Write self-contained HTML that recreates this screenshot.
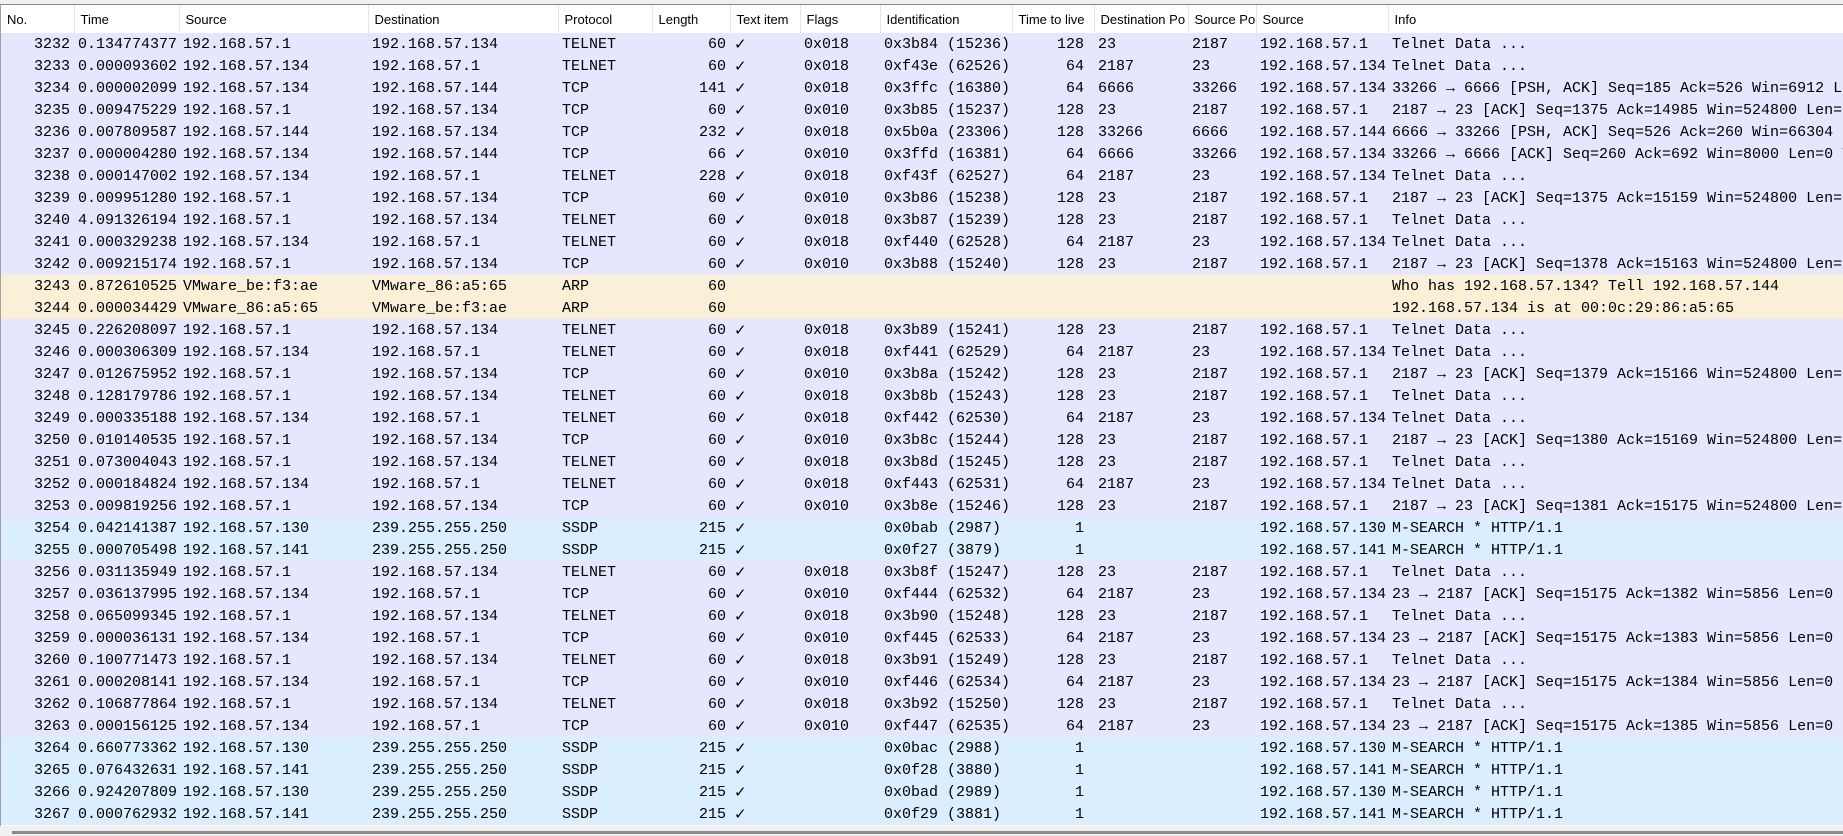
<!DOCTYPE html>
<html><head><meta charset="utf-8"><style>
body{margin:0;width:1843px;height:836px;background:#f0f0f0;overflow:hidden;position:relative}
.top{position:absolute;left:0;top:0;width:1843px;height:4px;background:#f0f0f0;border-bottom:1px solid #828790}
.frame{position:absolute;left:0;top:5px;width:1843px;height:821px;border-left:1px solid #a0a0a0;background:#fff;overflow:hidden}
table{border-collapse:collapse;table-layout:fixed;width:2100px}
th{height:28px;padding:0 0 0 6px;font:13px "Liberation Sans",sans-serif;text-align:left;font-weight:normal;color:#000;border-right:1px solid #e5e5e5;background:#fff;white-space:nowrap;overflow:hidden}
td{height:22px;padding:0 4px;font:15px "Liberation Mono",monospace;white-space:nowrap;overflow:hidden;color:#000}
tr.t td{background:#e7e6ff}tr.a td{background:#faf0d7}tr.s td{background:#daeeff}
td.r{text-align:right}
.bot{position:absolute;left:0;top:826px;width:1843px;height:10px;background:#f0f0f0}
.sb{position:absolute;left:12px;top:831px;width:1831px;height:3px;background:#8a8a8a}
</style></head><body>
<div class="top"></div>
<div class="frame"><table>
<colgroup><col style="width:73px"><col style="width:105px"><col style="width:189px"><col style="width:190px"><col style="width:94px"><col style="width:78px"><col style="width:70px"><col style="width:80px"><col style="width:132px"><col style="width:82px"><col style="width:94px"><col style="width:68px"><col style="width:132px"><col style="width:713px"></colgroup>
<tr><th>No.</th><th>Time</th><th>Source</th><th>Destination</th><th>Protocol</th><th>Length</th><th>Text item</th><th>Flags</th><th>Identification</th><th>Time to live</th><th>Destination Po</th><th>Source Po</th><th>Source</th><th>Info</th></tr>
<tbody id="b"></tbody></table></div>
<div class="bot"></div><div class="sb"></div>
<script>
var R=[
["t",3232,"0.134774377","192.168.57.1","192.168.57.134","TELNET",60,"0x018","0x3b84 (15236)",128,"23","2187","192.168.57.1","Telnet Data ..."],
["t",3233,"0.000093602","192.168.57.134","192.168.57.1","TELNET",60,"0x018","0xf43e (62526)",64,"2187","23","192.168.57.134","Telnet Data ..."],
["t",3234,"0.000002099","192.168.57.134","192.168.57.144","TCP",141,"0x018","0x3ffc (16380)",64,"6666","33266","192.168.57.134","33266 → 6666 [PSH, ACK] Seq=185 Ack=526 Win=6912 Len=89"],
["t",3235,"0.009475229","192.168.57.1","192.168.57.134","TCP",60,"0x010","0x3b85 (15237)",128,"23","2187","192.168.57.1","2187 → 23 [ACK] Seq=1375 Ack=14985 Win=524800 Len=0"],
["t",3236,"0.007809587","192.168.57.144","192.168.57.134","TCP",232,"0x018","0x5b0a (23306)",128,"33266","6666","192.168.57.144","6666 → 33266 [PSH, ACK] Seq=526 Ack=260 Win=66304 Len=178"],
["t",3237,"0.000004280","192.168.57.134","192.168.57.144","TCP",66,"0x010","0x3ffd (16381)",64,"6666","33266","192.168.57.134","33266 → 6666 [ACK] Seq=260 Ack=692 Win=8000 Len=0 TSval"],
["t",3238,"0.000147002","192.168.57.134","192.168.57.1","TELNET",228,"0x018","0xf43f (62527)",64,"2187","23","192.168.57.134","Telnet Data ..."],
["t",3239,"0.009951280","192.168.57.1","192.168.57.134","TCP",60,"0x010","0x3b86 (15238)",128,"23","2187","192.168.57.1","2187 → 23 [ACK] Seq=1375 Ack=15159 Win=524800 Len=0"],
["t",3240,"4.091326194","192.168.57.1","192.168.57.134","TELNET",60,"0x018","0x3b87 (15239)",128,"23","2187","192.168.57.1","Telnet Data ..."],
["t",3241,"0.000329238","192.168.57.134","192.168.57.1","TELNET",60,"0x018","0xf440 (62528)",64,"2187","23","192.168.57.134","Telnet Data ..."],
["t",3242,"0.009215174","192.168.57.1","192.168.57.134","TCP",60,"0x010","0x3b88 (15240)",128,"23","2187","192.168.57.1","2187 → 23 [ACK] Seq=1378 Ack=15163 Win=524800 Len=0"],
["a",3243,"0.872610525","VMware_be:f3:ae","VMware_86:a5:65","ARP",60,"","","","","","","Who has 192.168.57.134? Tell 192.168.57.144"],
["a",3244,"0.000034429","VMware_86:a5:65","VMware_be:f3:ae","ARP",60,"","","","","","","192.168.57.134 is at 00:0c:29:86:a5:65"],
["t",3245,"0.226208097","192.168.57.1","192.168.57.134","TELNET",60,"0x018","0x3b89 (15241)",128,"23","2187","192.168.57.1","Telnet Data ..."],
["t",3246,"0.000306309","192.168.57.134","192.168.57.1","TELNET",60,"0x018","0xf441 (62529)",64,"2187","23","192.168.57.134","Telnet Data ..."],
["t",3247,"0.012675952","192.168.57.1","192.168.57.134","TCP",60,"0x010","0x3b8a (15242)",128,"23","2187","192.168.57.1","2187 → 23 [ACK] Seq=1379 Ack=15166 Win=524800 Len=0"],
["t",3248,"0.128179786","192.168.57.1","192.168.57.134","TELNET",60,"0x018","0x3b8b (15243)",128,"23","2187","192.168.57.1","Telnet Data ..."],
["t",3249,"0.000335188","192.168.57.134","192.168.57.1","TELNET",60,"0x018","0xf442 (62530)",64,"2187","23","192.168.57.134","Telnet Data ..."],
["t",3250,"0.010140535","192.168.57.1","192.168.57.134","TCP",60,"0x010","0x3b8c (15244)",128,"23","2187","192.168.57.1","2187 → 23 [ACK] Seq=1380 Ack=15169 Win=524800 Len=0"],
["t",3251,"0.073004043","192.168.57.1","192.168.57.134","TELNET",60,"0x018","0x3b8d (15245)",128,"23","2187","192.168.57.1","Telnet Data ..."],
["t",3252,"0.000184824","192.168.57.134","192.168.57.1","TELNET",60,"0x018","0xf443 (62531)",64,"2187","23","192.168.57.134","Telnet Data ..."],
["t",3253,"0.009819256","192.168.57.1","192.168.57.134","TCP",60,"0x010","0x3b8e (15246)",128,"23","2187","192.168.57.1","2187 → 23 [ACK] Seq=1381 Ack=15175 Win=524800 Len=0"],
["s",3254,"0.042141387","192.168.57.130","239.255.255.250","SSDP",215,"","0x0bab (2987)",1,"","","192.168.57.130","M-SEARCH * HTTP/1.1"],
["s",3255,"0.000705498","192.168.57.141","239.255.255.250","SSDP",215,"","0x0f27 (3879)",1,"","","192.168.57.141","M-SEARCH * HTTP/1.1"],
["t",3256,"0.031135949","192.168.57.1","192.168.57.134","TELNET",60,"0x018","0x3b8f (15247)",128,"23","2187","192.168.57.1","Telnet Data ..."],
["t",3257,"0.036137995","192.168.57.134","192.168.57.1","TCP",60,"0x010","0xf444 (62532)",64,"2187","23","192.168.57.134","23 → 2187 [ACK] Seq=15175 Ack=1382 Win=5856 Len=0"],
["t",3258,"0.065099345","192.168.57.1","192.168.57.134","TELNET",60,"0x018","0x3b90 (15248)",128,"23","2187","192.168.57.1","Telnet Data ..."],
["t",3259,"0.000036131","192.168.57.134","192.168.57.1","TCP",60,"0x010","0xf445 (62533)",64,"2187","23","192.168.57.134","23 → 2187 [ACK] Seq=15175 Ack=1383 Win=5856 Len=0"],
["t",3260,"0.100771473","192.168.57.1","192.168.57.134","TELNET",60,"0x018","0x3b91 (15249)",128,"23","2187","192.168.57.1","Telnet Data ..."],
["t",3261,"0.000208141","192.168.57.134","192.168.57.1","TCP",60,"0x010","0xf446 (62534)",64,"2187","23","192.168.57.134","23 → 2187 [ACK] Seq=15175 Ack=1384 Win=5856 Len=0"],
["t",3262,"0.106877864","192.168.57.1","192.168.57.134","TELNET",60,"0x018","0x3b92 (15250)",128,"23","2187","192.168.57.1","Telnet Data ..."],
["t",3263,"0.000156125","192.168.57.134","192.168.57.1","TCP",60,"0x010","0xf447 (62535)",64,"2187","23","192.168.57.134","23 → 2187 [ACK] Seq=15175 Ack=1385 Win=5856 Len=0"],
["s",3264,"0.660773362","192.168.57.130","239.255.255.250","SSDP",215,"","0x0bac (2988)",1,"","","192.168.57.130","M-SEARCH * HTTP/1.1"],
["s",3265,"0.076432631","192.168.57.141","239.255.255.250","SSDP",215,"","0x0f28 (3880)",1,"","","192.168.57.141","M-SEARCH * HTTP/1.1"],
["s",3266,"0.924207809","192.168.57.130","239.255.255.250","SSDP",215,"","0x0bad (2989)",1,"","","192.168.57.130","M-SEARCH * HTTP/1.1"],
["s",3267,"0.000762932","192.168.57.141","239.255.255.250","SSDP",215,"","0x0f29 (3881)",1,"","","192.168.57.141","M-SEARCH * HTTP/1.1"]];
var h="";R.forEach(function(r){var arp=r[0]=="a";
h+='<tr class="'+r[0]+'"><td class="r">'+r[1]+'</td><td style="padding-left:4px">'+r[2]+'</td><td>'+r[3]+'</td><td>'+r[4]+'</td><td>'+r[5]+'</td><td class="r">'+r[6]+'</td><td>'+(arp?'':'✓')+'</td><td>'+r[7]+'</td><td>'+r[8]+'</td><td class="r" style="padding-right:10px">'+r[9]+'</td><td>'+r[10]+'</td><td>'+r[11]+'</td><td>'+r[12]+'</td><td>'+r[13]+'</td></tr>';});
document.getElementById("b").innerHTML=h;
</script>
</body></html>
